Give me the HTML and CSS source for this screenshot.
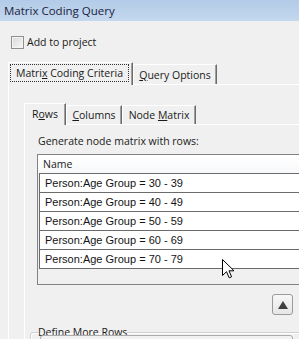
FILE: index.html
```html
<!DOCTYPE html>
<html>
<head>
<meta charset="utf-8">
<link rel="stylesheet" href="styles.css">
</head>
<body>
<div class="titlebar">Matrix Coding Query</div>
<div class="checkrow"><span class="checkbox"></span><span class="checklabel">Add to project</span></div>
<div class="outer">
  <div class="tabstrip outerstrip">
    <div class="tab selected w125"><span class="focus"><span>Matri<u>x</u> Coding Criteria</span></span></div>
    <div class="tab w84"><span><u>Q</u>uery Options</span></div>
  </div>
  <div class="panel outerpanel">
    <div class="tabstrip innerstrip">
      <div class="tab selected w42"><span>R<u>o</u>ws</span></div>
      <div class="tab w56"><span><u>C</u>olumns</span></div>
      <div class="tab w74"><span>Node <u>M</u>atrix</span></div>
    </div>
    <div class="panel innerpanel">
      <div class="caption">Generate node matrix with rows:</div>
      <div class="grid">
        <div class="gridhead">Name</div>
        <div class="rows">
          <div class="row">Person:Age Group = 30 - 39</div>
          <div class="row">Person:Age Group = 40 - 49</div>
          <div class="row">Person:Age Group = 50 - 59</div>
          <div class="row">Person:Age Group = 60 - 69</div>
          <div class="row">Person:Age Group = 70 - 79</div>
        </div>
      </div>
      <div class="btnrow">
        <div class="upbtn"><svg width="10" height="8" viewBox="0 0 10 8"><path d="M5 0 L10 8 L0 8 Z" fill="#404040"/></svg></div>
      </div>
      <fieldset class="group">
        <legend>Define More Rows</legend>
        <div class="combo"><span>Attribute Condition</span><svg class="arrow" width="7" height="4" viewBox="0 0 7 4"><path d="M0 0 L7 0 L3.5 4 Z" fill="#000"/></svg></div>
      </fieldset>
    </div>
  </div>
</div>
<svg class="cursor" width="13" height="20" viewBox="0 0 13 20"><path d="M0.5 0.5 L0.5 16.5 L4.5 12.7 L7.2 18.8 L9.6 17.8 L7 11.8 L12 11.8 Z" fill="#fff" stroke="#000" stroke-width="1" stroke-linejoin="miter"/></svg>
</body>
</html>
```

FILE: styles.css
```css
* { box-sizing: border-box; }
html, body { margin: 0; padding: 0; }
body {
  width: 299px;
  height: 339px;
  overflow: hidden;
  position: relative;
  background: #f0f0f0;
  font-family: "Open Sans", "Noto Sans", sans-serif;
  font-size: 10.5px;
  color: #1a1a1a;
}
.titlebar {
  height: 21px;
  line-height: 21px;
  padding-left: 4px;
  font-size: 11.5px;
  color: #1c2242;
  background: linear-gradient(#b3cbe7, #c4d8ee);
}
.checkrow {
  display: flex;
  align-items: center;
  height: 13px;
  margin: 15px 0 0 11px;
}
.checkbox {
  width: 13px;
  height: 13px;
  border: 1px solid #8e8f8f;
  background: linear-gradient(135deg, #d8d8d8, #f8f8f8);
  box-shadow: inset 0 0 0 1px #f4f4f4;
}
.checklabel { margin-left: 3px; line-height: 13px; }
.outer { margin: 13px 0 0 8px; }
.tabstrip {
  display: flex;
  align-items: flex-end;
}
.outerstrip { height: 22px; }
.innerstrip { height: 21px; }
.tab {
  display: flex;
  justify-content: center;
  align-items: center;
  background: #f0f0f0;
  border-top: 1px solid #ffffff;
  border-left: 1px solid #ffffff;
  border-right: 1px solid #6b6b6b;
  box-shadow: inset -1px 0 0 #a0a0a0;
  white-space: nowrap;
}
.outerstrip .tab { height: 20px; }
.innerstrip .tab { height: 19px; }
.tab.selected {
  position: relative;
  z-index: 1;
  margin-bottom: -1px;
}
.outerstrip .tab.selected { height: 23px; align-items: flex-start; justify-content: flex-start; }
.innerstrip .tab.selected { height: 22px; padding-bottom: 2px; }
.focus {
  display: flex;
  justify-content: center;
  align-items: center;
  width: 119px;
  height: 18px;
  margin: 1px 0 0 1px;
  border: 1px dotted #333;
}
.w125 { width: 125px; }
.w84 { width: 84px; }
.w42 { width: 42px; }
.w56 { width: 56px; }
.w74 { width: 74px; }
.panel {
  background: #f0f0f0;
  border-top: 1px solid #ffffff;
  border-left: 1px solid #ffffff;
}
.outerpanel {
  width: 320px;
  height: 260px;
  padding: 18px 0 0 15px;
}
.innerpanel {
  width: 282px;
  height: 240px;
  padding: 9px 13px 0 13px;
}
.caption { height: 15px; line-height: 15px; margin-bottom: 5px; }
.grid {
  width: 280px;
  height: 131px;
  margin-left: -1px;
  border: 1px solid #828282;
  border-right: none;
  background: #f0f0f0;
}
.gridhead {
  height: 18px;
  line-height: 18px;
  padding-left: 5px;
  background: linear-gradient(#ffffff, #f7f8fa);
}
.rows { margin-left: 1px; }
.row {
  height: 19px;
  line-height: 18px;
  padding-left: 5px;
  background: #ffffff;
  border-left: 1px solid #6b6b6b;
  border-bottom: 1px solid #6b6b6b;
  font-family: "Liberation Sans", Arial, sans-serif;
  font-size: 11px;
  color: #141414;
}
.row:first-child { height: 20px; border-top: 1px solid #6b6b6b; }
.btnrow {
  display: flex;
  justify-content: flex-end;
  margin-top: 9px;
}
.upbtn {
  width: 21px;
  height: 21px;
  display: flex;
  align-items: center;
  justify-content: center;
  border: 1px solid #9a9a9a;
  border-radius: 3px;
  background: linear-gradient(#f7f7f7, #e6e6e6);
}
.upbtn svg { display: block; margin-left: 1px; }
.group {
  width: 271px;
  margin: 11px 0 0 -8px;
  padding: 0 0 6px 7px;
  border: 1px solid #d0d0d0;
  border-radius: 3px;
  box-shadow: 1px 1px 0 #ffffff inset;
}
.group legend {
  padding: 0;
  line-height: 12px;
  height: 12px;
}
.combo {
  position: relative;
  width: 253px;
  height: 21px;
  margin: -3px 0 0 2px;
  padding-left: 4px;
  line-height: 19px;
  border: 1px solid #acacac;
  border-radius: 3px;
  background: linear-gradient(#f3f3f3, #e4e4e4);
}
.combo .arrow { position: absolute; right: 4px; top: 8px; }
.cursor { position: absolute; left: 222px; top: 259px; }
```
